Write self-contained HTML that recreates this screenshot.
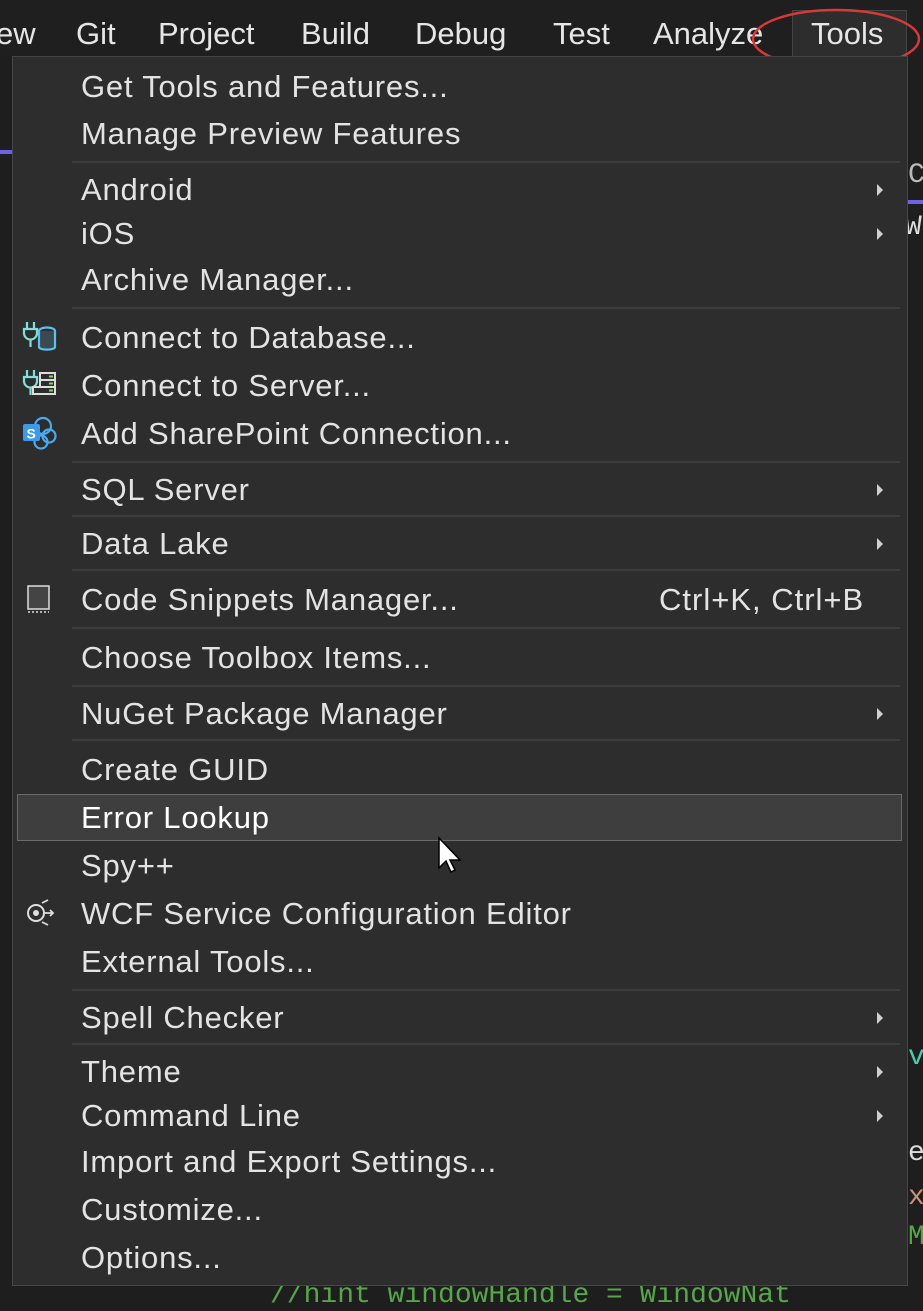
<!DOCTYPE html>
<html><head><meta charset="utf-8"><style>
*{margin:0;padding:0;box-sizing:border-box}
body{width:923px;height:1304px;background:#1e1e1e;position:relative;overflow:hidden;font-family:"Liberation Sans",sans-serif;color:#e0e0e0}
.bar{position:absolute;left:0;top:0;width:923px;height:56px;background:#1f1f1f}
.mb{position:absolute;top:14px;font-size:31px;color:#e6e6e6;line-height:40px}
.tools{position:absolute;left:792px;top:10px;width:115px;height:47px;background:#2d2d2d;border:1px solid #444;border-bottom:none}
.menu{position:absolute;left:12px;top:56px;width:896px;height:1230px;background:#2d2d2d;border:1px solid #464646}
.it{position:absolute;left:81px;font-size:31px;letter-spacing:0.8px;line-height:36px;height:36px;color:#e3e3e3;white-space:nowrap}
.sep{position:absolute;left:72px;width:828px;height:2px;background:#3d3d3d}
.arr{position:absolute;left:877px;width:0;height:0;border-top:6px solid transparent;border-bottom:6px solid transparent;border-left:6px solid #d0d0d0}
.hl{position:absolute;left:17px;top:794px;width:885px;height:47px;background:#3e3e3e;border:1.5px solid #6a6a6a}
.code{position:absolute;font-family:"Liberation Mono",monospace;font-size:28px}
</style></head><body>
<div class="bar"></div>
<div class="mb" style="left:-4px">ew</div>
<div class="mb" style="left:76px">Git</div>
<div class="mb" style="left:158px">Project</div>
<div class="mb" style="left:301px">Build</div>
<div class="mb" style="left:415px">Debug</div>
<div class="mb" style="left:553px">Test</div>
<div class="mb" style="left:653px">Analyze</div>
<div class="tools"></div>
<div class="mb" style="left:811px">Tools</div>
<svg style="position:absolute;left:750px;top:6px" width="173" height="66"><ellipse cx="86" cy="33" rx="83" ry="29" fill="none" stroke="#d93838" stroke-width="2.5"/></svg>
<div style="position:absolute;left:0;top:150px;width:12px;height:4px;background:#7160e8"></div>
<div style="position:absolute;left:908px;top:200px;width:15px;height:4px;background:#7160e8"></div>
<div class="code" style="left:908px;top:160px;color:#bbb">C</div>
<div class="code" style="left:905px;top:212px;color:#ddd">W</div>
<div class="code" style="left:908px;top:1042px;color:#4ec9b0">v</div>
<div class="code" style="left:908px;top:1138px;color:#ddd">e</div>
<div class="code" style="left:908px;top:1182px;color:#ce9178">x</div>
<div class="code" style="left:908px;top:1222px;color:#57a64a">M</div>
<div class="code" style="left:270px;top:1280px;color:#57a64a">//hint windowHandle = WindowNat</div>
<div class="menu"></div>
<div class="hl"></div>
<div class="it" style="top:69px">Get Tools and Features...</div>
<div class="it" style="top:116px">Manage Preview Features</div>
<div class="sep" style="top:161px"></div>
<div class="it" style="top:172px">Android</div><div class="arr" style="top:184px"></div>
<div class="it" style="top:216px">iOS</div><div class="arr" style="top:228px"></div>
<div class="it" style="top:262px">Archive Manager...</div>
<div class="sep" style="top:307px"></div>
<div class="it" style="top:320px">Connect to Database...</div>
<div class="it" style="top:368px">Connect to Server...</div>
<div class="it" style="top:416px">Add SharePoint Connection...</div>
<div class="sep" style="top:461px"></div>
<div class="it" style="top:472px">SQL Server</div><div class="arr" style="top:484px"></div>
<div class="sep" style="top:515px"></div>
<div class="it" style="top:526px">Data Lake</div><div class="arr" style="top:538px"></div>
<div class="sep" style="top:569px"></div>
<div class="it" style="top:582px">Code Snippets Manager...</div>
<div class="it" style="top:582px;left:659px;letter-spacing:1px">Ctrl+K, Ctrl+B</div>
<div class="sep" style="top:627px"></div>
<div class="it" style="top:640px">Choose Toolbox Items...</div>
<div class="sep" style="top:685px"></div>
<div class="it" style="top:696px">NuGet Package Manager</div><div class="arr" style="top:708px"></div>
<div class="sep" style="top:739px"></div>
<div class="it" style="top:752px">Create GUID</div>
<div class="it" style="top:800px;color:#fff">Error Lookup</div>
<div class="it" style="top:848px">Spy++</div>
<div class="it" style="top:896px">WCF Service Configuration Editor</div>
<div class="it" style="top:944px">External Tools...</div>
<div class="sep" style="top:989px"></div>
<div class="it" style="top:1000px">Spell Checker</div><div class="arr" style="top:1012px"></div>
<div class="sep" style="top:1043px"></div>
<div class="it" style="top:1054px">Theme</div><div class="arr" style="top:1066px"></div>
<div class="it" style="top:1098px">Command Line</div><div class="arr" style="top:1110px"></div>
<div class="it" style="top:1144px">Import and Export Settings...</div>
<div class="it" style="top:1192px">Customize...</div>
<div class="it" style="top:1240px">Options...</div>
<svg style="position:absolute;left:22px;top:320px" width="36" height="140">
<g fill="none" stroke="#7fe0d8" stroke-width="2.2"><path d="M5 2v7M12 2v7M2 9h13v4a6.5 6.5 0 0 1-13 0zM8.5 19v8"/></g>
<g fill="none" stroke="#5bc0f0" stroke-width="2.2"><ellipse cx="25" cy="11" rx="8" ry="3.5"/><path d="M17 11v16c0 3.5 16 3.5 16 0V11" fill="#3a4a50"/></g>
<g transform="translate(0,48)"><g fill="none" stroke="#7fe0d8" stroke-width="2.2"><path d="M5 2v7M12 2v7M2 9h13v4a6.5 6.5 0 0 1-13 0zM8.5 19v8"/></g>
<g fill="none" stroke="#ddd" stroke-width="2"><rect x="18" y="5" width="15" height="7"/><rect x="18" y="12" width="15" height="7"/><rect x="11" y="19" width="22" height="7"/></g>
<path d="M27 8.5h4M27 15.5h4M27 22.5h4" stroke="#8ed26a" stroke-width="2"/></g>
<g transform="translate(0,96)"><circle cx="21" cy="10" r="8" fill="none" stroke="#4aa8f0" stroke-width="2.2"/><circle cx="27" cy="20" r="6.5" fill="none" stroke="#4aa8f0" stroke-width="2.2"/><circle cx="19" cy="26" r="6.5" fill="none" stroke="#4aa8f0" stroke-width="2.2"/><rect x="1" y="8" width="17" height="17" rx="2" fill="#3c9ae8"/><text x="4.5" y="22.5" font-size="14" font-weight="bold" fill="#fff" font-family="Liberation Sans">S</text></g>
</svg>
<svg style="position:absolute;left:26px;top:584px" width="26" height="32"><rect x="2" y="2" width="21" height="23" fill="#444" stroke="#ddd" stroke-width="1.5"/><path d="M2 28h21" stroke="#ddd" stroke-dasharray="2 2" stroke-width="1.5"/></svg>
<svg style="position:absolute;left:24px;top:898px" width="34" height="30"><circle cx="12" cy="15" r="8" fill="none" stroke="#ddd" stroke-width="2"/><circle cx="12" cy="15" r="3" fill="#ddd"/><path d="M18 5l6-3M20 15h9M26 12l3 3-3 3M18 24l6 3" stroke="#ddd" stroke-width="1.8" fill="none"/></svg>
<svg style="position:absolute;left:436px;top:836px" width="28" height="40"><path d="M3 2v30l7-7 5 11 4-2-5-10h10z" fill="#fff" stroke="#000" stroke-width="1.5"/></svg>
</body></html>
